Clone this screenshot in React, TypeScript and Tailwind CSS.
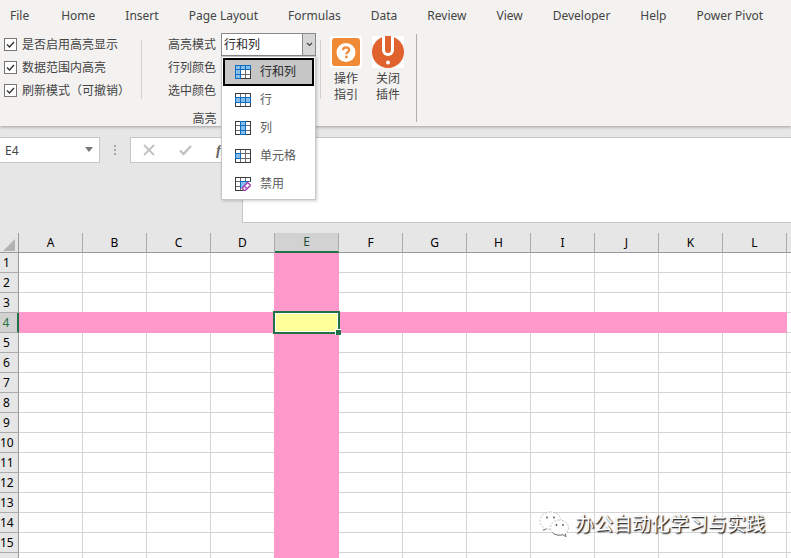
import type { ReactNode } from 'react';
import { useState } from 'react';
import clsx from 'clsx';

const TABS = [
  'File',
  'Home',
  'Insert',
  'Page Layout',
  'Formulas',
  'Data',
  'Review',
  'View',
  'Developer',
  'Help',
  'Power Pivot',
];

const OPTIONS = ['是否启用高亮显示', '数据范围内高亮', '刷新模式（可撤销）'];

const COLUMNS = ['A', 'B', 'C', 'D', 'E', 'F', 'G', 'H', 'I', 'J', 'K', 'L'];
const ROWS = Array.from({ length: 15 }, (_, i) => i + 1);

const ACTIVE_COLUMN = 'E';
const ACTIVE_ROW = 4;

type Mode = 'cross' | 'row' | 'column' | 'cell' | 'off';

const MODES: { id: Mode; label: string }[] = [
  { id: 'cross', label: '行和列' },
  { id: 'row', label: '行' },
  { id: 'column', label: '列' },
  { id: 'cell', label: '单元格' },
  { id: 'off', label: '禁用' },
];

/** 3x3 grid glyph with the part that the mode highlights filled in blue */
function ModeIcon({ mode }: { mode: Mode }) {
  return (
    <svg width="16" height="14" viewBox="0 0 16 14" fill="none" shapeRendering="crispEdges" aria-hidden="true">
      <rect x="0.5" y="0.5" width="15" height="13" fill="#fff" stroke="#3b3b3b" />
      <path d="M5.5 1v12M10.5 1v12M1 4.5h14M1 9.5h14" stroke="#6b6b6b" />
      {mode === 'cross' && (
        <>
          <path d="M0 0h16v5H6v9H0z" fill="#83beec" />
          <path d="M0.5 0.5h15v4h-10v9h-5zM5.5 1v4M10.5 1v4M1 4.5h5M1 9.5h5" stroke="#0f6cbd" />
        </>
      )}
      {mode === 'row' && (
        <>
          <rect x="0.5" y="4.5" width="15" height="5" fill="#83beec" stroke="#0f6cbd" />
          <path d="M5.5 5v4M10.5 5v4" stroke="#0f6cbd" />
        </>
      )}
      {mode === 'column' && (
        <>
          <rect x="5.5" y="0.5" width="5" height="13" fill="#83beec" stroke="#0f6cbd" />
          <path d="M6 4.5h4M6 9.5h4" stroke="#0f6cbd" />
        </>
      )}
      {mode === 'cell' && <rect x="0.5" y="4.5" width="5" height="5" fill="#83beec" stroke="#0f6cbd" />}
      {mode === 'off' && (
        <>
          <path d="M11 5h5v9h-5z" fill="#fff" />
          <path d="M6 5h8l-8 7z" fill="#83beec" />
          <path d="M5.5 11V4.5H13M15.5 4v1" stroke="#0f6cbd" />
          <g shapeRendering="auto">
            <path d="M7.2 11l5.4-5.6 3 2.900-5.400 5.200H9z" fill="#fff" stroke="#a33fb0" strokeWidth="1.4" />
            <path d="M9.200 9l3 3" stroke="#a33fb0" strokeWidth="1.4" />
          </g>
        </>
      )}
    </svg>
  );
}

function HelpIcon() {
  return (
    <svg width="32" height="32" viewBox="0 0 32 32" aria-hidden="true">
      <rect width="32" height="32" fill="#fff" />
      <rect x="2" y="2" width="28" height="28" rx="3" fill="#f08a36" />
      <circle cx="16" cy="16.5" r="9.5" fill="#fff" />
      <path
        d="M13 14.2c0-1.8 1.3-2.9 3-2.9s3.1 1 3.1 2.7c0 2-2.8 2.2-2.8 4.3"
        fill="none"
        stroke="#f08a36"
        strokeWidth="2.2"
      />
      <circle cx="16.3" cy="21" r="1.4" fill="#f08a36" />
    </svg>
  );
}

function PowerIcon() {
  return (
    <svg width="32" height="32" viewBox="0 0 32 32" aria-hidden="true">
      <rect width="32" height="32" fill="#fff" />
      <circle cx="16" cy="16" r="16" fill="#e0632f" />
      <path d="M10 0v14a6 6 0 0 0 12 0V0z" fill="#fff" />
      <path d="M13 0v14a3 3 0 0 0 6 0V0z" fill="#e0632f" />
      <circle cx="16" cy="26.5" r="2" fill="#fff" />
    </svg>
  );
}

function ChatLogo() {
  return (
    <svg width="32" height="28" viewBox="0 0 32 28" aria-hidden="true">
      <g fill="#fff" stroke="#b5b5b5" strokeWidth="0.8" strokeDasharray="2 1.5">
        <path d="M11.5 2C5.4 2 1 6 1 10.8c0 2.8 1.5 5.2 3.9 6.8L4 20.5l3.6-1.8c1.2.4 2.5.6 3.9.6 6 0 10.5-3.8 10.500-8.500S17.500 2 11.500 2z" />
        <path d="M20.500 10c-5.200 0-9.200 3.400-9.200 7.600s4 7.600 9.200 7.600c1.100 0 2.200-.2 3.200-.5l3.300 1.900-.8-2.900c2.100-1.400 3.400-3.600 3.400-6.100 0-4.200-4-7.600-9.100-7.600z" />
      </g>
      <path d="M4.300 20.300l3.300-1.600M13.500 22.500c2 2 4.500 2.700 7 2.700 1.100 0 2.200-.2 3.200-.5l3.300 1.900-.8-2.900" fill="none" stroke="#666" strokeWidth="0.9" />
      <g fill="#555">
        <circle cx="8" cy="7.5" r="0.9" />
        <circle cx="15" cy="7.5" r="0.9" />
        <circle cx="17.5" cy="15" r="0.9" />
        <circle cx="24" cy="15" r="0.9" />
      </g>
    </svg>
  );
}

function CheckOption({ label }: { label: string }) {
  return (
    <label className="flex h-[23px] items-center gap-[5px]">
      <span className="relative flex h-[13px] w-[13px]">
        <input
          type="checkbox"
          defaultChecked
          className="peer h-[13px] w-[13px] appearance-none border border-[#767676] bg-white"
        />
        <svg
          className="pointer-events-none absolute inset-0 hidden peer-checked:block"
          width="13"
          height="13"
          viewBox="0 0 13 13"
          fill="none"
          aria-hidden="true"
        >
          <path d="M3 6.5l2.5 2.5L10 4" stroke="#333" strokeWidth="1.4" />
        </svg>
      </span>
      {label}
    </label>
  );
}

function RibbonButton({ icon, lines }: { icon: ReactNode; lines: string[] }) {
  return (
    <button type="button" className="flex w-8 flex-col items-center gap-[3px]">
      {icon}
      <span className="leading-4">
        {lines.map((line) => (
          <span key={line} className="block">
            {line}
          </span>
        ))}
      </span>
    </button>
  );
}

function ModeSelect() {
  const [mode, setMode] = useState<Mode>('cross');

  return (
    <div className="relative w-[95px] self-start">
      <select
        id="mode"
        value={mode}
        onChange={(e) => setMode(e.target.value as Mode)}
        className="block h-[23px] w-full appearance-none border border-[#8a8a8a] bg-white pl-[2px] text-[#262626]"
      >
        {MODES.map((m) => (
          <option key={m.id} value={m.id}>
            {m.label}
          </option>
        ))}
      </select>
      <span className="pointer-events-none absolute inset-y-0 right-0 flex w-[14px] items-center justify-center border border-[#8a8a8a] bg-[#d6d6d6]">
        <svg width="7" height="5" viewBox="0 0 7 5" fill="none" aria-hidden="true">
          <path d="M1 1l2.5 2.5L6 1" stroke="#444" strokeWidth="1.2" />
        </svg>
      </span>

      {/* Open list */}
      <div
        role="listbox"
        aria-label="高亮模式"
        className="absolute top-full left-0 z-20 w-full border border-[#c6c6c6] bg-white p-px shadow-[1px_1px_3px_rgba(0,0,0,0.2)]"
      >
        {MODES.map((m) => (
          <button
            key={m.id}
            type="button"
            role="option"
            aria-selected={m.id === mode}
            onClick={() => setMode(m.id)}
            className={clsx(
              'flex h-7 w-full items-center gap-[9px] border-2 pl-[10px]',
              m.id === mode ? 'border-black bg-[#c6c6c6] text-[#262626]' : 'border-transparent text-[#5a5a5a]',
            )}
          >
            <ModeIcon mode={m.id} />
            {m.label}
          </button>
        ))}
      </div>
    </div>
  );
}

function Ribbon() {
  return (
    <header className="bg-[#f3f2f1] shadow-[0_1px_3px_rgba(0,0,0,0.3)]">
      <nav className="flex h-[33px] items-center gap-[30px] pb-[2px] pl-[10px] whitespace-nowrap">
        {TABS.map((tab) => (
          <button key={tab} type="button" className="first:mr-[2px]">
            {tab}
          </button>
        ))}
      </nav>

      <div className="flex h-[93px]">
        {/* Highlight group */}
        <div className="flex flex-col">
          <div className="flex pl-1">
            <div className="w-[137px]">
              {OPTIONS.map((label) => (
                <CheckOption key={label} label={label} />
              ))}
            </div>
            <div className="mt-[7px] h-[59px] w-px bg-[#d2d0ce]" />
            <div className="flex gap-[5px] pl-[26px]">
              <div className="leading-[23px]">
                <label htmlFor="mode" className="block">
                  高亮模式
                </label>
                <div>行列颜色</div>
                <div>选中颜色</div>
              </div>
              <ModeSelect />
            </div>
            <div className="mt-[7px] ml-1 h-[59px] w-px bg-[#d2d0ce]" />
          </div>
          <div className="mt-2 pl-[88px] text-center leading-[18px]">高亮</div>
        </div>

        {/* Help group */}
        <div className="flex items-start gap-[10px] pt-[3px] pl-[9px]">
          <RibbonButton icon={<HelpIcon />} lines={['操作', '指引']} />
          <RibbonButton icon={<PowerIcon />} lines={['关闭', '插件']} />
        </div>
        <div className="mt-px ml-3 h-[88px] w-px bg-[#b0aeac]" />
      </div>
    </header>
  );
}

function FormulaBar() {
  return (
    <div className="flex items-start pt-[11px] pb-[10px]">
      <div className="relative w-[100px]">
        <input
          aria-label="Name Box"
          defaultValue="E4"
          className="block h-[26px] w-full border border-l-0 border-[#c6c6c6] bg-white pl-[5px] text-[#444]"
        />
        <svg className="absolute top-[10px] right-[7px]" width="8" height="5" viewBox="0 0 8 5" aria-hidden="true">
          <path d="M0 0h8L4 5z" fill="#777" />
        </svg>
      </div>

      <div className="flex h-[26px] w-[30px] flex-col items-center justify-center gap-[2px]">
        <span className="h-[2px] w-[2px] bg-[#a6a6a6]" />
        <span className="h-[2px] w-[2px] bg-[#a6a6a6]" />
        <span className="h-[2px] w-[2px] bg-[#a6a6a6]" />
      </div>

      <div className="flex h-[26px] w-[113px] items-center border border-r-0 border-[#c6c6c6] bg-white pl-3">
        <button type="button" aria-label="Cancel">
          <svg width="12" height="12" viewBox="0 0 12 12" fill="none" aria-hidden="true">
            <path d="M1 1l10 10M11 1L1 11" stroke="#c2c2c2" strokeWidth="1.8" />
          </svg>
        </button>
        <button type="button" aria-label="Enter" className="ml-6">
          <svg width="13" height="12" viewBox="0 0 13 12" fill="none" aria-hidden="true">
            <path d="M1 6.5l3.500 3.500L12 2" stroke="#c2c2c2" strokeWidth="2.4" />
          </svg>
        </button>
        <button type="button" className="ml-6 font-['Liberation_Serif',serif] text-[15px] font-bold text-[#666] italic">
          fx
        </button>
      </div>

      <textarea
        aria-label="Formula Bar"
        className="-ml-px block h-[86px] flex-1 resize-none border border-r-0 border-[#c6c6c6] bg-white"
      />
    </div>
  );
}

function Sheet() {
  return (
    <table className="w-full table-fixed border-separate border-spacing-0 bg-white text-black">
      <colgroup>
        <col className="w-[19px]" />
        {COLUMNS.map((c) => (
          <col key={c} className="w-16" />
        ))}
        <col />
      </colgroup>
      <thead>
        <tr className="h-5 bg-[#e6e6e6]">
          <th className="border-r border-b border-[#999] p-0">
            <svg className="mt-1 ml-[3px]" width="12" height="12" viewBox="0 0 12 12" aria-hidden="true">
              <path d="M12 0v12H0z" fill="#b3b3b3" />
            </svg>
          </th>
          {COLUMNS.map((c) => (
            <th
              key={c}
              scope="col"
              className={clsx(
                'border-r p-0 leading-[18px] font-normal',
                c === ACTIVE_COLUMN
                  ? 'border-b-2 border-r-[#ababab] border-b-[#217346] bg-[#d2d2d2] text-[#1d4f36]'
                  : 'border-b border-r-[#ababab] border-b-[#999]',
              )}
            >
              {c}
            </th>
          ))}
          <th className="border-b border-[#999] p-0" />
        </tr>
      </thead>
      <tbody>
        {ROWS.map((r) => (
          <tr key={r} className="h-5">
            <th
              scope="row"
              className={clsx(
                'border-b p-0 pt-px pr-[5px] text-center leading-[18px] font-normal',
                r === ACTIVE_ROW
                  ? 'border-r-2 border-r-[#217346] border-b-[#ababab] bg-[#d2d2d2] text-[#217346]'
                  : 'border-r border-r-[#999] border-b-[#ababab] bg-[#e6e6e6]',
              )}
            >
              {r}
            </th>
            {COLUMNS.map((c) => {
              const inRow = r === ACTIVE_ROW;
              const inColumn = c === ACTIVE_COLUMN;
              // the fill also covers the grid line shared with the cell before it
              const pinkRight = inRow || inColumn || c === 'D';
              const pinkBottom = inRow || inColumn || r === ACTIVE_ROW - 1;
              return (
                <td
                  key={c}
                  className={clsx(
                    'relative border-r border-b p-0',
                    pinkRight ? 'border-r-[#ff99cc]' : 'border-r-[#d4d4d4]',
                    pinkBottom ? 'border-b-[#ff99cc]' : 'border-b-[#d4d4d4]',
                    (inRow || inColumn) && 'bg-[#ff99cc]',
                  )}
                >
                  {inRow && inColumn && (
                    <div className="absolute -inset-[2px] z-10 border-2 border-[#217346] bg-white p-px">
                      <div className="h-full bg-[#ffff99]" />
                      <span className="absolute -right-[3px] -bottom-[3px] h-[6px] w-[6px] border-t border-l border-white bg-[#217346]" />
                    </div>
                  )}
                </td>
              );
            })}
            <td className="border-b border-[#d4d4d4] p-0" />
          </tr>
        ))}
        {/* Partly scrolled row */}
        <tr className="h-5">
          <th className="border-r border-[#999] bg-[#e6e6e6] p-0" />
          {COLUMNS.map((c) => (
            <td
              key={c}
              className={clsx(
                'border-r p-0',
                c === ACTIVE_COLUMN || c === 'D' ? 'border-[#ff99cc]' : 'border-[#d4d4d4]',
                c === ACTIVE_COLUMN && 'bg-[#ff99cc]',
              )}
            />
          ))}
          <td className="p-0" />
        </tr>
      </tbody>
    </table>
  );
}

export default function App() {
  return (
    <div className="relative flex h-screen flex-col overflow-hidden bg-[#e6e6e6] font-['Noto_Sans','Noto_Sans_CJK_SC',sans-serif] text-[12px] text-[#444]">
      <Ribbon />
      <FormulaBar />
      <Sheet />

      {/* Watermark */}
      <div className="absolute right-[26px] bottom-5 z-20 flex items-center gap-1">
        <ChatLogo />
        <span className="text-[19px] leading-7 text-white [text-shadow:1px_1px_1px_#222,1px_1px_2px_#555]">
          办公自动化学习与实践
        </span>
      </div>
    </div>
  );
}
